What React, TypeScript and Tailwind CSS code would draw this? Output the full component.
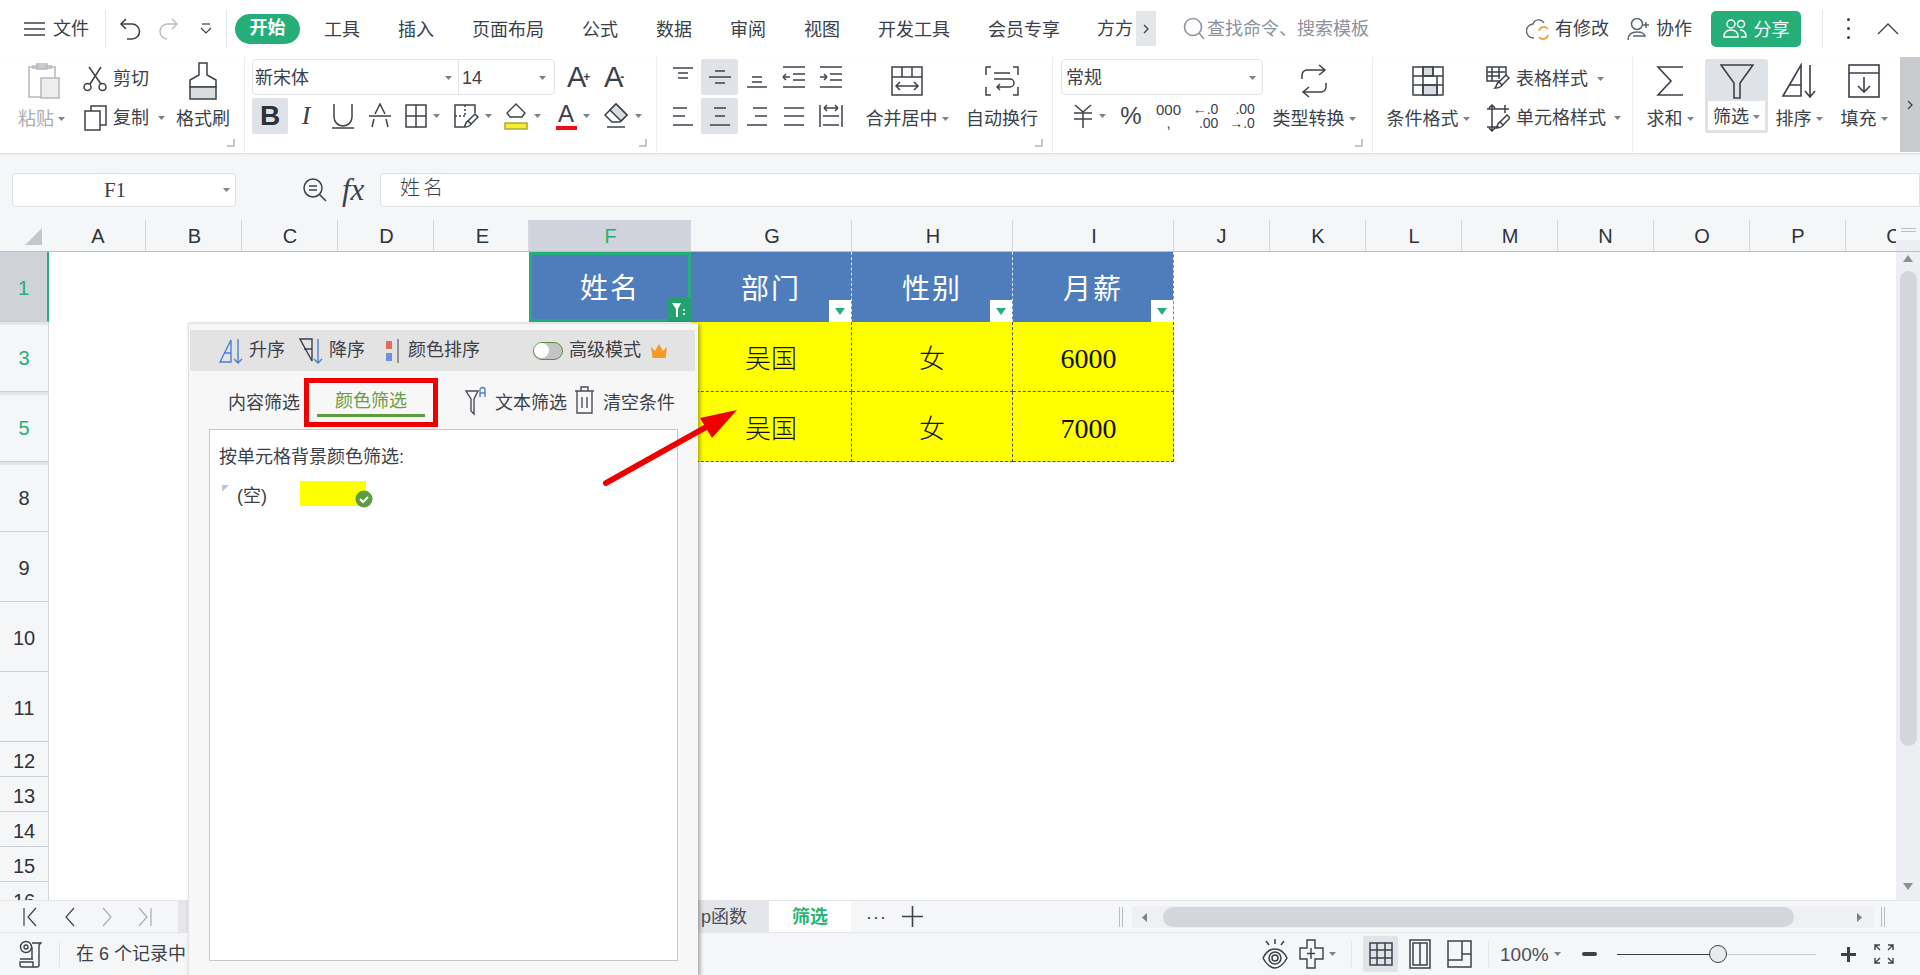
import React from "react";

const cjk = "font-['Liberation_Sans','Noto_Sans_CJK_SC',sans-serif]";
type P = { w: number; h: number; children: React.ReactNode; className?: string; sw?: number };
const S = ({ w, h, children, className, sw = 1.5 }: P) => (
  <svg width={w} height={h} viewBox={`0 0 ${w} ${h}`} fill="none" stroke="currentColor" strokeWidth={sw} className={"shrink-0 " + (className ?? "text-[#3c4149]")}>
    {children}
  </svg>
);
const Caret = ({ className = "" }: { className?: string }) => (
  <svg width="7" height="4" viewBox="0 0 7 4" className={"shrink-0 " + className}><path d="M0 0h7L3.5 4z" fill="#7c828b" /></svg>
);
const Corner = () => (
  <svg width="8" height="8" viewBox="0 0 8 8" className="absolute right-[9px] bottom-[6px]"><path d="M7 0v7H0" fill="none" stroke="#8b9097" strokeWidth="1" /></svg>
);
const L = ({ children, className = "text-[#3c4149]" }: { children: React.ReactNode; className?: string }) => (
  <span className={"text-[18px] leading-none whitespace-nowrap " + className}>{children}</span>
);
const Lines = ({ d, w = 24, h = 24 }: { d: number[][]; w?: number; h?: number }) => (
  <S w={w} h={h}>
    {d.map((l, i) => <line key={i} x1={l[0]} y1={l[1]} x2={l[2]} y2={l[3]} />)}
  </S>
);
const Big = ({ icon, label, caret, className = "" }: { icon: React.ReactNode; label: string; caret?: boolean; className?: string }) => (
  <div className={"flex flex-col items-center pt-[5px] shrink-0 " + className}>
    <div className="h-[38px] flex items-center justify-center">{icon}</div>
    <div className="h-[36px] pt-[2px] flex items-center gap-[4px]"><L>{label}</L>{caret && <Caret />}</div>
  </div>
);
const Slot = ({ children, className = "" }: { children: React.ReactNode; className?: string }) => (
  <div className={"h-[36px] flex items-center justify-center gap-[6px] shrink-0 rounded-[2px] " + className}>{children}</div>
);

const Brush = ({ x, y }: { x: number; y: number }) => (
  <g transform={`translate(${x} ${y})`}>
    <path d="M12 0l3 3-7 7-3-3z" />
    <path d="M5 7c-3 1-2 4-4 6 3 0 6-1 7-3" />
  </g>
);

function TitleBar() {
  const tabs = ["工具", "插入", "页面布局", "公式", "数据", "审阅", "视图", "开发工具", "会员专享"];
  return (
    <div className="h-[57px] bg-white flex items-center shrink-0">
      <div className="ml-[24px]"><Lines w={21} h={16} d={[[0, 2, 21, 2], [0, 8, 21, 8], [0, 14, 21, 14]]} /></div>
      <div className="ml-[8px] pt-[2px]"><L>文件</L></div>
      <div className="ml-[16px] w-px h-[38px] bg-[#e6e8eb]" />
      <div className="ml-[13px]">
        <S w={22} h={24} sw={1.6}><path d="M7 2L2 7l5 5" /><path d="M2 7h11a7 7 0 0 1 0 15H8" /></S>
      </div>
      <div className="ml-[18px]">
        <S w={20} h={24} sw={1.4} className="text-[#b9bcc1]"><path d="M13 2l5 5-5 5" /><path d="M18 7H9a7 7 0 0 0-1 15" /></S>
      </div>
      <div className="ml-[21px]">
        <S w={12} h={12} sw={1.2}><path d="M2 1h8" /><path d="M1 5l5 5 5-5" /></S>
      </div>
      <div className="ml-[14px] w-px h-[38px] bg-[#e6e8eb]" />
      <div className="ml-[8px] w-[65px] h-[30px] rounded-full bg-[#25ae78] text-white flex items-center justify-center font-bold text-[18px]">开始</div>
      <div className="ml-[24px] flex gap-[38px] pt-[2px]">{tabs.map((t) => <L key={t}>{t}</L>)}</div>
      <div className="ml-[37px] pt-[2px]"><L>方方</L></div>
      <div className="ml-[3px] w-[20px] h-[35px] bg-[#e4e6ea] flex items-center justify-center">
        <S w={6} h={10} sw={1.3}><path d="M1 1l4 4-4 4" /></S>
      </div>
      <div className="ml-[27px]">
        <S w={22} h={24} className="text-[#8f96a1]" sw={1.6}><circle cx="10" cy="10" r="8.5" /><path d="M16 16l5 6" /></S>
      </div>
      <div className="ml-[2px] pt-[2px]"><L className="text-[#8a92a0]">查找命令、搜索模板</L></div>
      <div className="ml-[157px]">
        <svg width="24" height="24" viewBox="0 0 24 24" fill="none" className="shrink-0">
          <path d="M8 21a7 7 0 0 1-1-14 6 6 0 0 1 11-1" stroke="#5f6670" strokeWidth="1.4" />
          <path d="M13 14a5 5 0 0 1 9-2M22 18a5 5 0 0 1-9 2" stroke="#f0a23c" strokeWidth="1.8" />
        </svg>
      </div>
      <div className="ml-[5px] pt-[2px]"><L>有修改</L></div>
      <div className="ml-[18px]">
        <S w={23} h={24} sw={1.5} className="text-[#5b6470]"><circle cx="10" cy="7" r="5.5" /><path d="M1 23c0-6 3-8 9-8s7 2 8 4H6" /><path d="M16 8h6M19 5v6" /></S>
      </div>
      <div className="ml-[6px] pt-[2px]"><L>协作</L></div>
      <div className="ml-[19px] w-[90px] h-[36px] rounded-[5px] bg-[#25ae78] text-white flex items-center justify-center gap-[7px]">
        <S w={24} h={20} sw={1.5} className="text-white"><circle cx="8" cy="5" r="4" /><circle cx="18" cy="5" r="3.5" /><path d="M1 18c0-5 3-7 7-7s7 2 7 7z" /><path d="M17 11c4 0 6 2 6 7h-5" /></S>
        <span className="text-[18px] leading-none pt-[2px]">分享</span>
      </div>
      <div className="ml-[21px] w-px h-[38px] bg-[#e6e8eb]" />
      <div className="ml-[24px] flex flex-col gap-[6px]">
        <div className="w-[3px] h-[3px] rounded-full bg-[#3c4149]" />
        <div className="w-[3px] h-[3px] rounded-full bg-[#3c4149]" />
        <div className="w-[3px] h-[3px] rounded-full bg-[#3c4149]" />
      </div>
      <div className="ml-[27px]"><S w={22} h={13} sw={1.4}><path d="M1 12L11 2l10 10" /></S></div>
    </div>
  );
}

function Ribbon() {
  return (
    <div className="h-[96px] bg-white flex shrink-0 shadow-[0_1px_2px_#d9dbde] relative">
      {/* clipboard */}
      <div className="w-[245px] shrink-0 flex relative border-r border-[#eceef0]">
        <div className="ml-[18px] w-[50px] flex flex-col items-start pt-[5px] shrink-0">
          <div className="h-[38px] ml-[9px] flex items-center">
            <S w={34} h={38} className="text-[#b5b8bc]">
              <path d="M6 4h18v2H6zM6 5H2v30h12" />
              <path d="M24 5h4v11" />
              <rect x="10" y="2" width="10" height="5" />
              <rect x="14" y="16" width="18" height="20" fill="#ededed" />
            </S>
          </div>
          <div className="h-[36px] pt-[2px] flex items-center gap-[4px]"><L className="text-[#a9acb1]">粘贴</L><Caret /></div>
        </div>
        <div className="ml-[15px] flex flex-col gap-[3px] pt-[4px] w-[88px] shrink-0">
          <div className="h-[36px] flex items-center gap-[6px]">
            <S w={24} h={26}><line x1="6" y1="1" x2="18" y2="18" /><line x1="18" y1="1" x2="7" y2="18" /><circle cx="4.5" cy="21" r="3.5" /><circle cx="19.5" cy="21" r="3.5" /></S>
            <L>剪切</L>
          </div>
          <div className="h-[36px] flex items-center gap-[6px]">
            <S w={24} h={26}><path d="M8 6V1h15v19h-6" /><rect x="2" y="6" width="15" height="19" /></S>
            <L>复制</L><Caret className="ml-[3px]" />
          </div>
        </div>
        <Big className="ml-[5px] w-[54px]" label="格式刷" icon={
          <S w={30} h={38}><path d="M11 1h8v12l9 5v7H2v-7l9-5z" /><rect x="2" y="25" width="26" height="12" fill="#dadde0" /></S>
        } />
        <Corner />
      </div>
      {/* font */}
      <div className="w-[412px] shrink-0 relative border-r border-[#eceef0] pl-[7px] flex flex-col gap-[3px] pt-[2px]">
        <div className="h-[36px] flex items-center">
          <div className="w-[303px] h-[36px] border border-[#e2e4e7] rounded-[4px] flex shrink-0">
            <div className="w-[206px] border-r border-[#e2e4e7] flex items-center justify-between pl-[2px] pr-[6px] pt-[2px]"><L>新宋体</L><Caret /></div>
            <div className="flex-1 flex items-center justify-between pl-[3px] pr-[8px] pt-[2px]"><L>14</L><Caret /></div>
          </div>
          <div className="ml-[12px] w-[28px] text-[#3c4149] text-[29px] leading-none font-light">A<sup className="text-[12px] font-bold -ml-[3px]">+</sup></div>
          <div className="ml-[9px] w-[28px] text-[#3c4149] text-[29px] leading-none font-light">A<sup className="text-[12px] font-bold -ml-[3px]">-</sup></div>
        </div>
        <div className="h-[36px] flex items-center">
          <Slot className="w-[36px] bg-[#dfe2e6]"><span className="text-[28px] font-bold leading-none text-[#2e3238]">B</span></Slot>
          <Slot className="w-[36px]"><span className="font-['Liberation_Serif',serif] italic text-[26px] leading-none text-[#3c4149]">I</span></Slot>
          <Slot className="w-[37px]"><S w={24} h={26}><path d="M3 1v13a9 9 0 0 0 18 0V1" /><line x1="1" y1="25" x2="23" y2="25" /></S></Slot>
          <Slot className="w-[37px]"><S w={24} h={26}><path d="M7 11L12 1l5 10" /><line x1="1" y1="13" x2="23" y2="13" /><path d="M6 16l-2 8M18 16l2 8" /></S></Slot>
          <Slot className="w-[49px]"><S w={22} h={26}><rect x="1" y="2" width="20" height="22" /><line x1="11" y1="2" x2="11" y2="24" /><line x1="1" y1="13" x2="21" y2="13" /></S><Caret /></Slot>
          <Slot className="w-[50px]"><S w={26} h={26}><path d="M22 10V2H2v22h8" strokeDasharray="none" /><path d="M2 13h10M12 2v10" strokeDasharray="2 2" /><Brush x={10} y={11} /></S><Caret /></Slot>
          <Slot className="w-[51px]">
            <svg width="24" height="28" viewBox="0 0 24 28" fill="none" stroke="#3c4149" strokeWidth="1.4" className="shrink-0"><path d="M12 2l9 9-3 4H6l-3-4z" /><rect x="1" y="21" width="22" height="6" fill="#f5ee32" stroke="#a9a431" /></svg>
            <Caret />
          </Slot>
          <Slot className="w-[49px]">
            <div className="flex flex-col items-center"><span className="text-[24px] leading-[24px] font-light text-[#3c4149]">A</span><div className="w-[21px] h-[4px] bg-[#ee0e14]" /></div>
            <Caret />
          </Slot>
          <Slot className="w-[51px]"><S w={26} h={26}><path d="M13 1L2 12l7 7h8l7-7z" /><path d="M13 1L7 7l11 11 6-6z" fill="#dadde0" /><line x1="4" y1="24" x2="22" y2="24" /></S><Caret /></Slot>
        </div>
        <Corner />
      </div>
      {/* alignment */}
      <div className="w-[396px] shrink-0 relative border-r border-[#eceef0] pl-[7px] flex">
        <div className="w-[185px] shrink-0 flex flex-col gap-[3px] pt-[2px]">
          <div className="h-[36px] flex">
            <Slot className="w-[37px]"><Lines d={[[2, 3, 22, 3], [7, 8, 17, 8], [7, 13, 17, 13]]} /></Slot>
            <Slot className="w-[37px] bg-[#dfe2e6]"><Lines d={[[7, 6, 17, 6], [1, 12, 23, 12], [7, 18, 17, 18]]} /></Slot>
            <Slot className="w-[37px]"><Lines d={[[7, 12, 17, 12], [7, 17, 17, 17], [2, 22, 22, 22]]} /></Slot>
            <Slot className="w-[37px]"><Lines d={[[1, 2, 23, 2], [11, 9, 23, 9], [11, 15, 23, 15], [1, 22, 23, 22], [1, 12, 8, 12], [1, 12, 4, 9], [1, 12, 4, 15]]} /></Slot>
            <Slot className="w-[37px]"><Lines d={[[1, 2, 23, 2], [11, 9, 23, 9], [11, 15, 23, 15], [1, 22, 23, 22], [1, 12, 8, 12], [8, 12, 5, 9], [8, 12, 5, 15]]} /></Slot>
          </div>
          <div className="h-[36px] flex">
            <Slot className="w-[37px]"><Lines d={[[2, 4, 16, 4], [2, 12, 14, 12], [2, 21, 22, 21]]} /></Slot>
            <Slot className="w-[37px] bg-[#dfe2e6]"><Lines d={[[6, 4, 18, 4], [7, 12, 17, 12], [2, 21, 22, 21]]} /></Slot>
            <Slot className="w-[37px]"><Lines d={[[8, 4, 22, 4], [10, 12, 22, 12], [2, 21, 22, 21]]} /></Slot>
            <Slot className="w-[37px]"><Lines d={[[2, 4, 22, 4], [2, 12, 22, 12], [2, 21, 22, 21]]} /></Slot>
            <Slot className="w-[37px]"><Lines d={[[1, 1, 1, 23], [23, 1, 23, 23], [4, 12, 20, 12], [4, 21, 20, 21], [5, 4, 19, 4], [5, 4, 8, 1], [5, 4, 8, 7], [19, 4, 16, 1], [19, 4, 16, 7]]} /></Slot>
          </div>
        </div>
        <Big className="ml-[13px] w-[90px]" label="合并居中" caret icon={
          <S w={32} h={30}><rect x="1" y="1" width="30" height="28" /><path d="M1 11h30M11 1v10M21 1v10" /><path d="M5 20h22M9 16l-4 4 4 4M23 16l4 4-4 4" /></S>
        } />
        <Big className="ml-[8px] w-[84px]" label="自动换行" icon={
          <S w={34} h={32}><path d="M6 2H1v8M28 2h5v8M1 22v8h5M33 22v8h-5" /><path d="M9 8h16M9 14h16a3 3 0 0 1 0 8H12M15 19l-3 3 3 3" /></S>
        } />
        <Corner />
      </div>
      {/* number */}
      <div className="w-[320px] shrink-0 relative border-r border-[#eceef0] pl-[8px] flex">
        <div className="w-[202px] shrink-0 flex flex-col gap-[3px] pt-[2px]">
          <div className="h-[36px] w-[202px] border border-[#e2e4e7] rounded-[4px] flex items-center justify-between pl-[4px] pr-[6px] pt-[2px]"><L>常规</L><Caret /></div>
          <div className="h-[36px] flex items-center">
            <Slot className="w-[52px] pl-[4px]"><Lines w={20} h={24} d={[[2, 1, 10, 8], [18, 1, 10, 8], [1, 9, 19, 9], [1, 15, 19, 15], [10, 8, 10, 24]]} /><Caret /></Slot>
            <Slot className="w-[36px]"><span className="text-[24px] font-light leading-none text-[#3c4149]">%</span></Slot>
            <Slot className="w-[39px]"><span className="text-[15px] leading-[13px] text-[#3c4149] text-center">000<br />,</span></Slot>
            <Slot className="w-[35px]"><span className="text-[14px] leading-[14px] text-[#3c4149] text-right">←.0<br />.00</span></Slot>
            <Slot className="w-[38px]"><span className="text-[14px] leading-[14px] text-[#3c4149] text-right">.00<br />→.0</span></Slot>
          </div>
        </div>
        <Big className="ml-[6px] w-[90px]" label="类型转换" caret icon={
          <S w={28} h={34}><path d="M2 15V11a5 5 0 0 1 5-5h17M19 1l6 5-6 5" /><path d="M26 19v4a5 5 0 0 1-5 5H4M9 23l-6 5 6 5" /></S>
        } />
        <Corner />
      </div>
      {/* styles */}
      <div className="w-[260px] shrink-0 border-r border-[#eceef0] flex">
        <Big className="ml-[11px] w-[88px]" label="条件格式" caret icon={
          <S w={32} h={30}><rect x="1" y="1" width="30" height="28" /><rect x="11" y="1" width="10" height="9" fill="#d9dce0" /><rect x="11" y="19" width="14" height="10" fill="#d9dce0" /><path d="M1 10h30M1 19h30M11 1v28M21 1v9M25 10v19" /></S>
        } />
        <div className="ml-[14px] flex flex-col gap-[3px] pt-[4px]">
          <div className="h-[36px] flex items-center gap-[6px]">
            <S w={24} h={26}><path d="M14 15H1V1h19v9" /><path d="M1 6h18M1 10h13M6 1v14M13 1v12" /><Brush x={8} y={9} /></S>
            <L>表格样式</L><Caret className="ml-[3px]" />
          </div>
          <div className="h-[36px] flex items-center gap-[6px]">
            <S w={24} h={28}><path d="M1 5h22M6 1v26M1 23h12M3 24l3 3 3-3M3 4l3-3 3 3M19 1v8" /><Brush x={9} y={11} /></S>
            <L>单元格样式</L><Caret className="ml-[2px]" />
          </div>
        </div>
      </div>
      {/* editing */}
      <div className="flex-1 flex">
        <Big className="ml-[12px] w-[50px]" label="求和" caret icon={<S w={28} h={32} sw={1.6}><path d="M27 2H2l13 14L2 30h25" /></S>} />
        <div className="ml-[10px] w-[63px] h-[74px] mt-[2px] bg-[#dfe2e6] rounded-[2px] flex flex-col items-center shrink-0 pt-[4px]">
          <div className="h-[36px] flex items-center"><S w={34} h={36} sw={1.6}><path d="M1 2h32L20 20v15h-6V20z" /></S></div>
          <div className="w-[57px] h-[29px] mt-[2px] pt-[2px] bg-white flex items-center justify-center gap-[4px]"><L>筛选</L><Caret /></div>
        </div>
        <Big className="ml-[6px] w-[50px]" label="排序" caret icon={<S w={36} h={36} sw={1.6}><path d="M2 33L20 2v31zM9 22h11" /><path d="M29 2v32M24 28l5 6 5-6" /></S>} />
        <Big className="ml-[15px] w-[50px]" label="填充" caret icon={<S w={32} h={34} sw={1.6}><rect x="1" y="1" width="30" height="32" /><path d="M1 9h30M16 13v15M10 22l6 6 6-6" /></S>} />
        <div className="ml-auto w-[20px] h-[95px] bg-[#c9cbcf] flex items-center justify-center">
          <S w={6} h={10} sw={1.3}><path d="M1 1l4 4-4 4" /></S>
        </div>
      </div>
    </div>
  );
}

function FormulaBar() {
  return (
    <div className="h-[67px] bg-[#f5f6f8] pt-[20px] flex items-start shrink-0">
      <div className="ml-[12px] w-[224px] h-[34px] bg-white border border-[#dfe1e5] rounded-[4px] flex items-center shrink-0">
        <span className="flex-1 text-center text-[21px] leading-none text-[#3c4149] font-['Liberation_Serif',serif] pr-[6px]">F1</span>
        <Caret className="mr-[5px]" />
      </div>
      <div className="ml-[67px] mt-[5px]">
        <S w={24} h={24} sw={1.5}><circle cx="10" cy="10" r="9" /><path d="M6 8h8M6 12h8M16 16l7 7" /></S>
      </div>
      <span className="ml-[15px] mt-[2px] w-[29px] font-['Liberation_Serif',serif] italic text-[31px] leading-[30px] text-[#3c4149]">fx</span>
      <div className="ml-[9px] flex-1 h-[34px] bg-white border border-[#dfe1e5] rounded-l-[4px] flex items-center pl-[19px] pb-[4px]">
        <span className="text-[20px] leading-none text-[#3c4149] font-light tracking-[3px]">姓名</span>
      </div>
    </div>
  );
}

const cols: [string, string][] = [
  ["A", "w-[97px] pl-[2px]"], ["B", "w-[96px] pl-[2px]"], ["C", "w-[96px] pl-[1px]"], ["D", "w-[96px] pl-[2px]"], ["E", "w-[95px] pl-[3px]"],
  ["F", "w-[162px] pl-[2px]"], ["G", "w-[161px] pl-[2px]"], ["H", "w-[161px] pl-[2px]"], ["I", "w-[161px] pl-[2px]"],
  ["J", "w-[96px]"], ["K", "w-[96px] pl-[1px]"], ["L", "w-[96px] pl-[1px]"], ["M", "w-[96px] pl-[1px]"], ["N", "w-[96px]"], ["O", "w-[96px] pl-[1px]"], ["P", "w-[96px] pl-[1px]"], ["C", "w-[96px]"],
];

function ColumnHeader() {
  return (
    <div className="h-[32px] bg-[#f5f6f8] flex shrink-0 border-b border-[#b9bdc4] overflow-hidden relative">
      <div className="w-[49px] shrink-0 flex items-end justify-end pr-[7px] pb-[6px]">
        <svg width="17" height="17" viewBox="0 0 17 17" className="shrink-0"><path d="M17 0v17H0z" fill="#c3c7cd" /></svg>
      </div>
      {cols.map(([c, w], i) => (
        <div key={i} className={"shrink-0 flex items-center justify-center border-r border-[#d3d6db] text-[20px] leading-none " + w + (c === "F" ? " bg-[#d0d3db] text-[#25ae78]" : " text-[#2f3339]")}>{c}</div>
      ))}
      <div className="absolute right-0 top-0 bottom-0 w-[24px] bg-[#f5f6f8] flex flex-col items-center">
        <div className="mt-[8px] w-[15px] h-[4px] border-y border-[#b9bdc4]" />
        <div className="mt-auto w-full h-[11px] bg-[#eceef1]" />
      </div>
    </div>
  );
}

const rows: [number, string, boolean][] = [
  [1, "h-[70px]", false], [3, "h-[70px]", true], [5, "h-[70px]", true], [8, "h-[70px]", true], [9, "h-[70px]", false], [10, "h-[70px]", false], [11, "h-[70px]", false],
  [12, "h-[35px]", false], [13, "h-[35px]", false], [14, "h-[35px]", false], [15, "h-[35px]", false], [16, "h-[35px]", false],
];

const Hd = ({ t, w }: { t: string; w: string }) => (
  <div className={"relative shrink-0 h-full pt-[5px] bg-[#4f7dbb] border-r border-dashed border-white/80 flex items-center justify-center text-white text-[28px] leading-none tracking-[2px] " + w}>
    {t}
    <div className="absolute right-0 bottom-0 w-[22px] h-[22px] bg-white flex items-center justify-center">
      <svg width="10" height="7" viewBox="0 0 10 7"><path d="M0 0h10L5 7z" fill="#25ae78" /></svg>
    </div>
  </div>
);
const Yc = ({ t, w, num }: { t: string; w: string; num?: boolean }) => (
  <div className={"shrink-0 h-full pt-[4px] bg-[#ffff00] border-r border-b border-dashed border-[#555] flex items-center justify-center text-[#111] leading-none " + (num ? "font-['Liberation_Serif',serif] text-[28px] pr-[9px] " : "font-light text-[26px] ") + w}>{t}</div>
);

function Sheet() {
  return (
    <div className="flex-1 min-h-0 flex bg-white overflow-hidden">
      <div className="flex-1 min-w-0 flex flex-col">
        {rows.map(([n, h, hid]) => (
          <div key={n} className={"flex shrink-0 " + h}>
            <div className={"w-[49px] shrink-0 flex items-center justify-center text-[20px] leading-none border-b border-[#c9ccd2] " +
              (hid ? "border-t-[3px] border-t-[#e3e5e8] " : "pt-[3px] ") +
              (n === 1 ? "bg-[#cfd2d8] text-[#25ae78] border-r-2 border-r-[#25ae78]" : n === 3 || n === 5 ? "bg-[#f5f6f8] text-[#25ae78] border-r border-r-[#d3d6db]" : "bg-[#f5f6f8] text-[#2f3339] border-r border-r-[#d3d6db]")}>{n}</div>
            {n <= 5 && (
              <div className="flex ml-[480px] h-full">
                {n === 1 && (
                  <>
                    <div className="relative shrink-0 w-[162px] h-full pt-[3px] bg-[#4f7dbb] border-[3px] border-[#25ae78] flex items-center justify-center text-white text-[28px] leading-none tracking-[2px]">
                      姓名
                      <div className="absolute -right-[3px] -bottom-[3px] w-[24px] h-[24px] bg-[#25a06f] flex items-center justify-center">
                        <svg width="16" height="16" viewBox="0 0 16 16"><path d="M1 1h9L7 7v8H5V7z" fill="#fff" /><path d="M12 8h2M12 12h2" stroke="#fff" strokeWidth="1.5" /></svg>
                      </div>
                    </div>
                    <Hd t="部门" w="w-[161px]" /><Hd t="性别" w="w-[161px]" /><Hd t="月薪" w="w-[161px]" />
                  </>
                )}
                {n === 3 && (
                  <>
                    <div className="w-[162px] shrink-0" /><Yc t="吴国" w="w-[161px]" /><Yc t="女" w="w-[161px]" /><Yc t="6000" w="w-[161px]" num />
                  </>
                )}
                {n === 5 && (
                  <>
                    <div className="w-[162px] shrink-0" /><Yc t="吴国" w="w-[161px]" /><Yc t="女" w="w-[161px]" /><Yc t="7000" w="w-[161px]" num />
                  </>
                )}
              </div>
            )}
          </div>
        ))}
      </div>
      <div className="w-[24px] shrink-0 bg-[#eceef1] flex flex-col items-center pb-[10px]">
        <svg width="10" height="7" viewBox="0 0 10 7" className="mt-[3px]"><path d="M5 0l5 7H0z" fill="#8b9097" /></svg>
        <div className="mt-[9px] w-[17px] h-[475px] rounded-full bg-[#d3d6dc]" />
        <svg width="10" height="7" viewBox="0 0 10 7" className="mt-auto"><path d="M5 7L0 0h10z" fill="#8b9097" /></svg>
      </div>
    </div>
  );
}

function SheetBar() {
  return (
    <div className="h-[33px] flex shrink-0 bg-[#f5f6f8] border-y border-[#e3e5e8]">
      <div className="w-[178px] shrink-0 flex items-center">
        <div className="ml-[23px]"><S w={15} h={20} sw={1.2}><path d="M1 1v18M13 1L5 10l8 9" /></S></div>
        <div className="ml-[24px]"><S w={15} h={20} sw={1.2}><path d="M12 1L4 10l8 9" /></S></div>
        <div className="ml-[23px]"><S w={15} h={20} sw={1.2} className="text-[#a8acb3]"><path d="M3 1l8 9-8 9" /></S></div>
        <div className="ml-[22px]"><S w={15} h={20} sw={1.2} className="text-[#a8acb3]"><path d="M2 1l8 9-8 9M14 1v18" /></S></div>
      </div>
      <div className="w-[591px] shrink-0 bg-[#e4e6eb] flex items-center justify-end pr-[22px]">
        <span className="text-[18px] leading-none text-[#4a4f57]">p函数</span>
      </div>
      <div className="w-[82px] shrink-0 bg-white flex items-center justify-center text-[18px] leading-none font-bold text-[#25b57c]">筛选</div>
      <div className="ml-[15px] text-[#3c4149] text-[18px] leading-none flex items-center tracking-[1px]">···</div>
      <div className="ml-[15px] flex items-center"><S w={21} h={21} sw={1.6}><path d="M10.5 0v21M0 10.5h21" /></S></div>
      <div className="ml-[196px] flex items-center"><div className="w-[4px] h-[20px] border-x border-[#b9bdc4]" /></div>
      <div className="ml-[9px] w-[742px] h-[22px] mt-[5px] bg-[#eef0f4] flex items-center relative shrink-0">
        <svg width="5" height="9" viewBox="0 0 5 9" className="ml-[10px] shrink-0"><path d="M5 0v9L0 4.5z" fill="#7c828b" /></svg>
        <div className="ml-[16px] w-[631px] h-[20px] rounded-full bg-[#d3d6dc] shrink-0" />
        <svg width="5" height="9" viewBox="0 0 5 9" className="ml-auto mr-[12px] shrink-0"><path d="M0 0v9l5-4.5z" fill="#7c828b" /></svg>
      </div>
      <div className="ml-[7px] flex items-center"><div className="w-[4px] h-[20px] border-x border-[#b9bdc4]" /></div>
    </div>
  );
}

function StatusBar() {
  return (
    <div className="h-[42px] flex items-center shrink-0 bg-[#f5f6f8]">
      <div className="ml-[18px]"><S w={24} h={28} sw={1.4}><circle cx="8" cy="7" r="5.5" /><circle cx="8" cy="7" r="2" /><path d="M14 3h9l-2 2v20a2 2 0 0 1-2 2H4a2 2 0 0 1-2-2v-3h13v5M14 7v12M2 19h13" /></S></div>
      <div className="ml-[17px] w-px h-[26px] bg-[#e3e5e8]" />
      <div className="ml-[16px] text-[18px] leading-none text-[#3c4149] whitespace-nowrap">在 6 个记录中</div>
      <div className="ml-[1076px]"><S w={26} h={32} sw={1.5}><path d="M13 1v5M4 3l3 4M22 3l-3 4" /><path d="M1 20c3-6 8-9 12-9s9 3 12 9c-3 6-8 10-12 10S4 26 1 20z" /><circle cx="13" cy="20" r="6" /><circle cx="13" cy="20" r="3" /></S></div>
      <div className="ml-[11px]"><S w={25} h={30} sw={1.4}><path d="M8 1h8v8h8v11h-8v9H8v-9H1V9h7z" /><path d="M12 9v11M8 14.5h8" /></S></div>
      <Caret className="ml-[5px]" />
      <div className="ml-[15px] w-px h-[26px] bg-[#e3e5e8]" />
      <div className="ml-[11px] w-[35px] h-[36px] bg-[#e0e3e8] rounded-[2px] flex items-center justify-center">
        <S w={24} h={24} sw={1.5}><rect x="1" y="1" width="22" height="22" /><path d="M1 8h22M1 16h22M8 1v22M16 1v22" /></S>
      </div>
      <div className="ml-[11px]"><S w={22} h={30} sw={1.5}><rect x="1" y="1" width="20" height="28" /><rect x="4" y="4" width="14" height="22" /><path d="M11 4v22" /></S></div>
      <div className="ml-[16px]"><S w={25} h={28} sw={1.5}><path d="M1 1h23v26H1zM1 20h14V1M24 14H15" /></S></div>
      <div className="ml-[16px] w-px h-[26px] bg-[#e3e5e8]" />
      <div className="ml-[11px] text-[19px] leading-none text-[#4a4f57] whitespace-nowrap">100%</div>
      <Caret className="ml-[5px]" />
      <div className="ml-[21px] w-[15px] h-[4px] rounded-full bg-[#3c4149]" />
      <div className="ml-[20px] w-[199px] h-[18px] flex items-center relative shrink-0">
        <div className="w-[93px] h-px bg-[#3c4149]" />
        <div className="w-[18px] h-[18px] -ml-[1px] rounded-full border border-[#3c4149] bg-[#e8eaed] shrink-0" />
        <div className="flex-1 h-px bg-[#c9ccd2]" />
      </div>
      <div className="ml-[25px]"><S w={15} h={15} sw={3}><path d="M7.5 0v15M0 7.5h15" /></S></div>
      <div className="ml-[17px]"><S w={22} h={22} sw={1.4}><path d="M2 7V2h5M2 2l5 5M20 7V2h-5M20 2l-5 5M2 15v5h5M2 20l5-5M20 15v5h-5M20 20l-5-5" /></S></div>
    </div>
  );
}

function Popup() {
  return (
    <div className="absolute left-[188px] top-[323px] w-[510px] h-[652px] bg-[#f7f7f7] border-l border-t border-[#e2e2e2] shadow-[2px_1px_4px_rgba(0,0,0,0.35)] flex flex-col pl-[1px] pt-[6px] z-10">
      <div className="h-[41px] mr-[3px] bg-[#e3e3e3] flex items-center shrink-0">
        <div className="ml-[29px]">
          <svg width="24" height="28" viewBox="0 0 24 28" fill="none" strokeWidth="1.4" stroke="#4c7fd0" className="shrink-0"><path d="M1 25L12 3v22zM5 16h7" /><path d="M19 2v24M15 22l4 4 4-4" /></svg>
        </div>
        <div className="ml-[6px]"><L>升序</L></div>
        <div className="ml-[14px]">
          <svg width="24" height="28" viewBox="0 0 24 28" fill="none" strokeWidth="1.4" stroke="#4c7fd0" className="shrink-0"><path d="M1 2h12v22zM5 12h8" stroke="#3c4149" /><path d="M19 2v24M15 22l4 4 4-4" /></svg>
        </div>
        <div className="ml-[6px]"><L>降序</L></div>
        <div className="ml-[20px]">
          <svg width="16" height="28" viewBox="0 0 16 28" className="shrink-0"><rect x="1" y="4" width="6" height="8" fill="#e56b5d" /><rect x="1" y="16" width="6" height="8" fill="#6f8fe0" /><path d="M13 2v24" stroke="#6b7078" strokeWidth="1.4" /></svg>
        </div>
        <div className="ml-[7px]"><L>颜色排序</L></div>
        <div className="ml-[53px] w-[30px] h-[18px] rounded-full bg-[#c4c4c4] border border-[#5b8f3c] flex items-center">
          <div className="w-[15px] h-[15px] rounded-full bg-white" />
        </div>
        <div className="ml-[6px]"><L>高级模式</L></div>
        <div className="ml-[9px]">
          <svg width="18" height="16" viewBox="0 0 18 16" className="shrink-0"><path d="M1 4l4 4 4-7 4 7 4-4-1.5 11h-13z" fill="#f59a23" /></svg>
        </div>
      </div>
      <div className="h-[58px] flex shrink-0 items-start relative">
        <div className="ml-[38px] mt-[21px]"><L>内容筛选</L></div>
        <div className="ml-[17px] w-[108px] h-[35px] mt-[11px] flex flex-col items-center border-b-[3px] border-[#5e9a3e] pt-[10px]">
          <L className="text-[#6a9e45]">颜色筛选</L>
        </div>
        <div className="ml-[40px] mt-[15px]">
          <svg width="22" height="32" viewBox="0 0 22 32" fill="none" strokeWidth="1.4" className="shrink-0"><path d="M1 5h12l-4 8v15l-3-3V13z" stroke="#4a4f57" /><path d="M15 11V4a2.5 2.5 0 0 1 5 0v7M15 7h5" stroke="#4c7fd0" /></svg>
        </div>
        <div className="ml-[8px] mt-[21px]"><L>文本筛选</L></div>
        <div className="ml-[7px] mt-[15px]">
          <S w={21} h={28} sw={1.4} className="text-[#4a4f57]"><path d="M1 5h19M7 5V1h7v4M3 5v22h15V5M8 11v11M13 11v11" /></S>
        </div>
        <div className="ml-[8px] mt-[21px]"><L>清空条件</L></div>
      </div>
      <div className="ml-[19px] flex-1 bg-white border border-[#c4c7cc] mb-[14px] w-[469px] flex flex-col">
        <div className="mt-[16px] ml-[9px]"><L>按单元格背景颜色筛选:</L></div>
        <div className="mt-[11px] flex items-start relative">
          <svg width="7" height="7" viewBox="0 0 7 7" className="ml-[12px] mt-[4px] shrink-0"><path d="M0 0h7L0 7z" fill="#c3c7cd" /></svg>
          <div className="ml-[8px] mt-[4px]"><L>(空)</L></div>
          <div className="ml-[33px] w-[66px] h-[25px] bg-[#ffff00] relative">
            <svg width="18" height="18" viewBox="0 0 18 18" className="absolute -right-[7px] top-[9px]"><circle cx="9" cy="9" r="8.5" fill="#5f9c3f" /><path d="M5 9l3 3 5-5" fill="none" stroke="#fff" strokeWidth="2" /></svg>
          </div>
        </div>
      </div>
    </div>
  );
}

const Anno = () => (
  <>
    <div className="absolute left-[304px] top-[378px] w-[134px] h-[49px] border-[5px] border-[#ee0000] z-20" />
    <svg width="150" height="90" viewBox="0 0 150 90" className="absolute left-[600px] top-[405px] z-20">
      <path d="M6 78L108 21" stroke="#ee0000" strokeWidth="6" strokeLinecap="round" />
      <path d="M137 5L100 13L112 33z" fill="#ee0000" />
    </svg>
  </>
);

export default function App() {
  return (
    <div className={"relative w-[1920px] h-[975px] flex flex-col overflow-hidden bg-white " + cjk}>
      <TitleBar />
      <Ribbon />
      <FormulaBar />
      <ColumnHeader />
      <Sheet />
      <SheetBar />
      <StatusBar />
      <Popup />
      <Anno />
    </div>
  );
}
